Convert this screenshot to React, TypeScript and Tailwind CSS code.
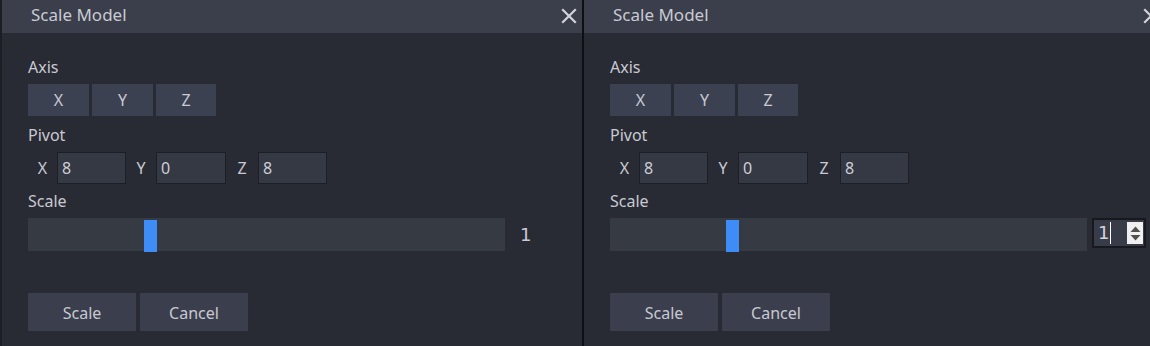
import React from "react";

const font = { fontFamily: '"Noto Sans", "Open Sans", sans-serif' };

function CloseIcon() {
  return (
    <svg width="16" height="16" viewBox="0 0 16 16" className="text-[#d2d3db]">
      <path
        d="M2 2l12 12M14 2L2 14"
        stroke="currentColor"
        strokeWidth="2.2"
        strokeLinecap="square"
      />
    </svg>
  );
}

function Spinner() {
  return (
    <div className="flex h-[22px] w-[16px] flex-col items-center justify-center gap-[3px] bg-[#f0f0f0]">
      <svg width="11" height="6" viewBox="0 0 11 6">
        <path d="M0.5 6L5.5 0.5L10.5 6Z" fill="#505050" />
      </svg>
      <svg width="11" height="6" viewBox="0 0 11 6">
        <path d="M0.5 0L5.5 5.5L10.5 0Z" fill="#505050" />
      </svg>
    </div>
  );
}

function PivotField({
  label,
  value,
  labelWidth,
  inputWidth,
}: {
  label: string;
  value: string;
  labelWidth: string;
  inputWidth: string;
}) {
  return (
    <div className="flex items-center">
      <span className={`${labelWidth} text-center text-[16px] text-[#c8c9d2]`}>
        {label}
      </span>
      <div
        className={`${inputWidth} flex h-[32px] items-center border border-[#1c1f25] bg-[#353943] pl-[4px] text-[16px] text-[#cdced7]`}
      >
        {value}
      </div>
    </div>
  );
}

function Dialog({ focused }: { focused?: boolean }) {
  return (
    <div className="flex h-[346px] w-[580px] shrink-0 flex-col bg-[#282b34]" style={font}>
      <div className="flex h-[33px] shrink-0 items-start justify-between bg-[#3b3e4b] pl-[29px] pr-[5px]">
        <span className="text-[17px] leading-[30px] text-[#c9cad3]">Scale Model</span>
        <div className="pt-[8px]">
          <CloseIcon />
        </div>
      </div>

      <div className="flex flex-col pl-[26px]">
        <div className="mt-[24px] text-[16px] leading-[20px] text-[#c8c9d2]">Axis</div>
        <div className="mt-[7px] flex gap-[3px]">
          {["X", "Y", "Z"].map((a, i) => (
            <div
              key={a}
              className={`${i === 2 ? "w-[60px]" : "w-[61px]"} flex h-[32px] items-center justify-center bg-[#3c4152] text-[16px] text-[#c8c9d2]`}
            >
              {a}
            </div>
          ))}
        </div>

        <div className="mt-[9px] text-[16px] leading-[20px] text-[#c8c9d2]">Pivot</div>
        <div className="mt-[7px] flex">
          <PivotField label="X" value="8" labelWidth="w-[29px]" inputWidth="w-[69px]" />
          <PivotField label="Y" value="0" labelWidth="w-[30px]" inputWidth="w-[70px]" />
          <PivotField label="Z" value="8" labelWidth="w-[32px]" inputWidth="w-[69px]" />
        </div>

        <div className="mt-[7px] text-[16px] leading-[20px] text-[#c8c9d2]">Scale</div>
        <div className="mt-[7px] flex items-start">
          <div className="relative h-[33px] w-[477px] bg-[#363a43]">
            <div className="absolute left-[116px] top-[2px] h-[32px] w-[13px] bg-[#3e8df7]" />
          </div>
          {focused ? (
            <div className="ml-[5px] flex h-[30px] w-[54px] items-center border-2 border-[#17191e] bg-[#383c49] pl-[4px] pr-[1px]">
              <span
                className="text-[18px] leading-none text-[#d3d4dc]"
                style={{ fontFamily: '"DejaVu Sans", sans-serif' }}
              >
                1
              </span>
              <div className="ml-[1px] h-[22px] w-px bg-white" />
              <div className="ml-auto">
                <Spinner />
              </div>
            </div>
          ) : (
            <span
              className="ml-[15px] mt-[7px] text-[18px] leading-[20px] text-[#c8c9d2]"
              style={{ fontFamily: '"DejaVu Sans", sans-serif' }}
            >
              1
            </span>
          )}
        </div>

        <div className="mt-[42px] flex gap-[4px]">
          <div className="flex h-[38px] w-[108px] items-center justify-center bg-[#3b3f4d] pt-[1px] text-[16px] text-[#c8c9d2]">
            Scale
          </div>
          <div className="flex h-[38px] w-[108px] items-center justify-center bg-[#3b3f4d] pt-[1px] text-[16px] text-[#c8c9d2]">
            Cancel
          </div>
        </div>
      </div>
    </div>
  );
}

export default function App() {
  return (
    <div className="flex h-[346px] w-[1150px] overflow-hidden bg-[#1c1e24]">
      <div className="h-full w-[2px] shrink-0 bg-[#1c1e24]" />
      <Dialog />
      <div className="h-full w-[2px] shrink-0 bg-[#0e0f12]" />
      <Dialog focused />
    </div>
  );
}
